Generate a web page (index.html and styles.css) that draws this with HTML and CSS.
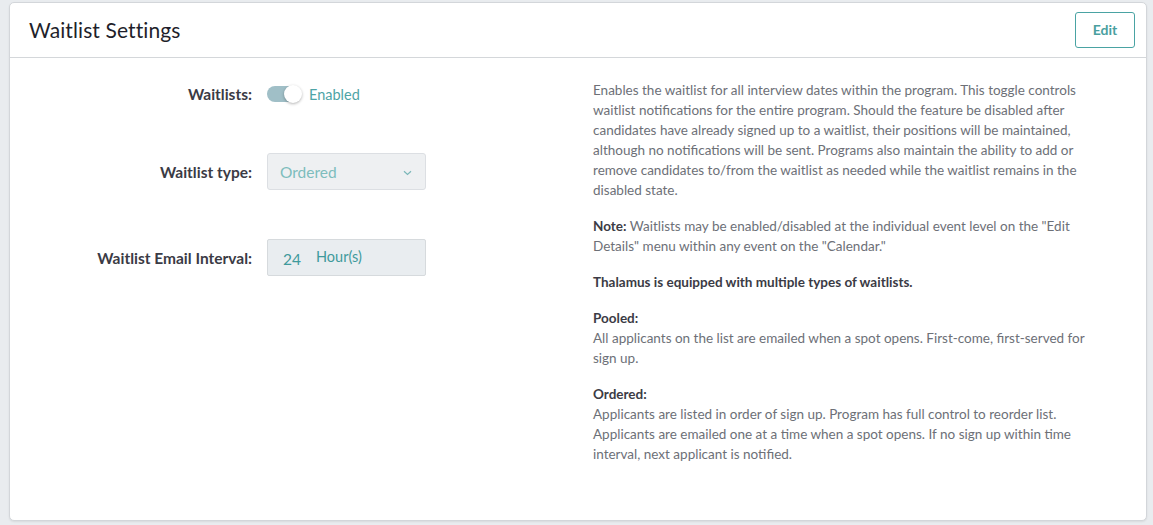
FILE: index.html
```html
<!DOCTYPE html>
<html>
<head>
<meta charset="utf-8">
<link rel="stylesheet" href="styles.css">
</head>
<body>
<div class="card">
  <div class="card-header">
    <h1 class="title">Waitlist Settings</h1>
    <button class="btn-edit">Edit</button>
  </div>
  <div class="card-body">
    <div class="form">
      <div class="row row-toggle">
        <div class="label">Waitlists:</div>
        <div class="control">
          <span class="toggle"><span class="knob"></span></span>
          <span class="toggle-text">Enabled</span>
        </div>
      </div>
      <div class="row row-select">
        <div class="label">Waitlist type:</div>
        <div class="control">
          <div class="select">
            <span class="select-value">Ordered</span>
            <svg class="chev" width="9" height="6" viewBox="0 0 9 6"><path d="M1 1.2 L4.5 4.5 L8 1.2" fill="none" stroke="#7bb7b9" stroke-width="1.2"/></svg>
          </div>
        </div>
      </div>
      <div class="row row-interval">
        <div class="label">Waitlist Email Interval:</div>
        <div class="control">
          <div class="interval">
            <span class="num">24</span>
            <span class="unit">Hour(s)</span>
          </div>
        </div>
      </div>
    </div>
    <div class="help">
      <p>Enables the waitlist for all interview dates within the program. This toggle controls waitlist notifications for the entire program. Should the feature be disabled after candidates have already signed up to a waitlist, their positions will be maintained, although no notifications will be sent. Programs also maintain the ability to add or remove candidates to/from the waitlist as needed while the waitlist remains in the disabled state.</p>
      <p><b>Note:</b> Waitlists may be enabled/disabled at the individual event level on the "Edit Details" menu within any event on the "Calendar."</p>
      <p><b>Thalamus is equipped with multiple types of waitlists.</b></p>
      <p><b>Pooled:</b><br>All applicants on the list are emailed when a spot opens. First-come, first-served for sign up.</p>
      <p><b>Ordered:</b><br>Applicants are listed in order of sign up. Program has full control to reorder list. Applicants are emailed one at a time when a spot opens. If no sign up within time interval, next applicant is notified.</p>
    </div>
  </div>
</div>
</body>
</html>
```
FILE: styles.css
```css
* { box-sizing: border-box; }
html, body { margin: 0; padding: 0; }
body {
  background: #e9ecef;
  font-family: "Lato", "Open Sans", sans-serif;
  padding: 2px 6px 4px 9px;
  height: 525px;
}
.card {
  background: #fff;
  border: 1px solid #d3d6da;
  border-radius: 5px;
  height: 519px;
  box-shadow: 0 1px 2px rgba(0,0,0,0.08);
}
.card-header {
  height: 55px;
  border-bottom: 1px solid #d4d7da;
  display: flex;
  align-items: center;
  justify-content: space-between;
  padding: 0 11px 0 19px;
}
.title {
  margin: 0 0 2px;
  font-size: 21px;
  font-weight: 400;
  color: #1f1f2b;
  letter-spacing: 0.1px;
}
.btn-edit {
  width: 60px;
  height: 36px;
  margin-bottom: 1px;
  background: #fff;
  border: 1px solid #4aa3a3;
  border-radius: 3px;
  color: #4a9fa0;
  font-family: inherit;
  font-weight: 700;
  font-size: 14px;
}
.card-body {
  display: flex;
  padding-top: 22px;
}
.form {
  width: 583px;
  flex: none;
}
.row {
  display: flex;
  align-items: center;
}
.label {
  width: 257px;
  text-align: right;
  font-weight: 700;
  font-size: 15.5px;
  color: #3b3b45;
  padding-right: 15px;
  flex: none;
}
.control { display: flex; align-items: center; }
.row-toggle { height: 30px; margin-top: -1px; }
.row-select { margin-top: 44px; }
.row-interval { margin-top: 49px; }
.toggle {
  position: relative;
  width: 34px;
  height: 16px;
  border-radius: 8px;
  background: #a0bfc7;
  display: inline-block;
}
.knob {
  position: absolute;
  right: -1px;
  top: -1px;
  width: 18px;
  height: 18px;
  border-radius: 50%;
  background: #fff;
  box-shadow: 0 1px 3px rgba(0,0,0,0.3);
}
.toggle-text {
  margin-left: 8px;
  font-size: 14.5px;
  color: #4ea4a6;
}
.select {
  width: 159px;
  height: 37px;
  background: #eef0f2;
  border: 1px solid #dcdfe3;
  border-radius: 3px;
  display: flex;
  align-items: center;
  justify-content: space-between;
  padding: 0 13px 0 12px;
}
.select-value {
  font-size: 15.5px;
  color: #7dbdbd;
}
.chev { margin-top: 2px; }
.interval {
  width: 159px;
  height: 37px;
  background: #e9edf0;
  border: 1px solid #d6dadd;
  border-radius: 2px;
  display: flex;
  align-items: center;
  padding-left: 15px;
}
.num {
  font-size: 15.5px;
  color: #3f9a9c;
  margin-top: 2px;
}
.unit {
  font-size: 14.5px;
  color: #3f9a9c;
  margin-left: 15px;
  margin-top: -3px;
}
.help {
  width: 512px;
  font-size: 13.5px;
  line-height: 20px;
  color: #6d7077;
}
.help p { margin: 0 0 16px; }
.help b { color: #3b3b45; font-weight: 700; }
```
